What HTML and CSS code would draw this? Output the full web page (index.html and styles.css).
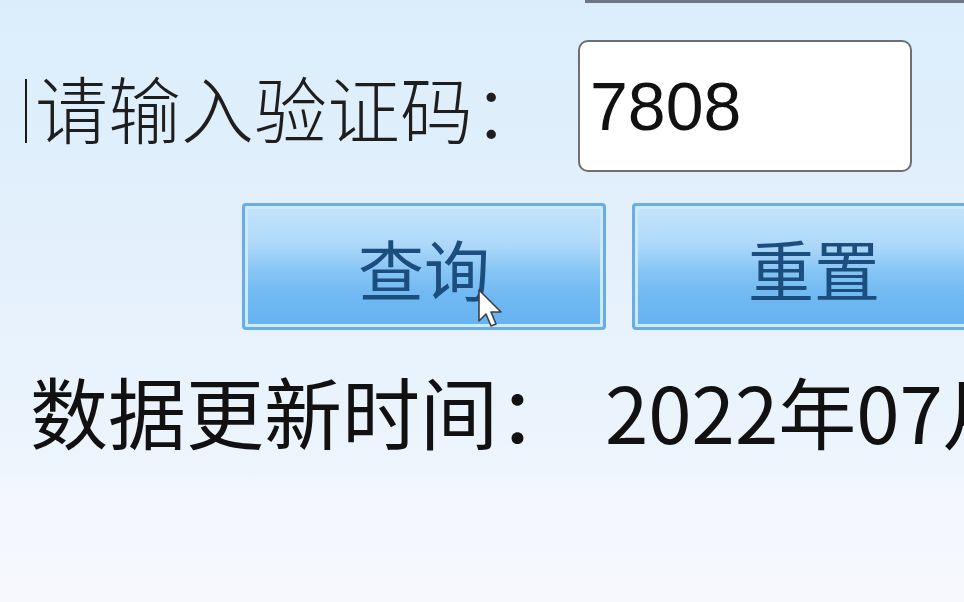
FILE: index.html
```html
<!DOCTYPE html>
<html lang="zh-CN">
<head>
<meta charset="utf-8">
<title>验证码查询</title>
<link rel="stylesheet" href="styles.css">
</head>
<body>
<div class="screen">
  <div class="top-edge"></div>
  <div class="row verify">
    <span class="caret"></span>
    <label class="label" for="code">请输入验证码：</label>
    <div class="input" id="code">7808</div>
  </div>
  <div class="row buttons">
    <button class="btn" type="button">查询</button>
    <button class="btn" type="button">重置</button>
  </div>
  <div class="row update">
    <span class="label2">数据更新时间：</span>
    <span class="date">2022年07月</span>
  </div>
  <svg class="pointer" width="34" height="44" viewBox="0 0 34 44" aria-hidden="true">
    <path d="M2 2 L2 33 L9 26 L14 38 L19 36 L14 24 L24 24 Z" fill="#ffffff" stroke="#3a3f48" stroke-width="1.6" stroke-linejoin="round"/>
  </svg>
</div>
</body>
</html>
```
FILE: styles.css
```css
html, body {
  margin: 0;
  padding: 0;
}
body {
  font-family: "Noto Sans CJK SC", "Noto Sans", sans-serif;
  background: #f5f8fd;
}
.screen {
  position: relative;
  width: 964px;
  height: 602px;
  overflow: hidden;
  background: linear-gradient(180deg, #dbedfb 0%, #e3f0fc 40%, #edf5fd 78%, #f3f7fd 81%, #f6f8fd 100%);
}
.top-edge {
  margin-left: 585px;
  height: 0;
  border-top: 3px solid #6e7682;
}
.row {
  display: flex;
  align-items: center;
  white-space: nowrap;
}
.verify {
  margin-top: 37px;
  padding-left: 25px;
  height: 132px;
}
.caret {
  width: 2px;
  height: 64px;
  margin-top: 10px;
  background: #1a1a1a;
  flex-shrink: 0;
}
.label {
  margin-left: 8px;
  font-size: 73px;
  font-weight: 300;
  line-height: 1;
  color: #1e1e1e;
}
.input {
  box-sizing: border-box;
  margin-left: 32px;
  width: 334px;
  height: 132px;
  flex-shrink: 0;
  border: 2px solid #6f6f6f;
  border-radius: 10px;
  background: #ffffff;
  padding-left: 10px;
  display: flex;
  align-items: center;
  font-family: "Liberation Sans", Arial, sans-serif;
  font-size: 68px;
  color: #111111;
}
.buttons {
  margin-top: 31px;
  padding-left: 242px;
  gap: 26px;
}
.btn {
  box-sizing: border-box;
  flex-shrink: 0;
  width: 364px;
  height: 127px;
  padding: 0;
  border: 3px solid #68ade6;
  border-radius: 4px;
  box-shadow: inset 0 0 0 3px #cdeafd;
  background: linear-gradient(180deg, #c4e4fb 0%, #aed8f9 32%, #84c4f4 55%, #6fb8f2 75%, #66b3f0 100%);
  font-family: "Noto Sans CJK SC", sans-serif;
  font-size: 66px;
  line-height: 1;
  color: #1b4d7e;
}
.update {
  margin-top: 36px;
  padding-left: 30px;
  font-size: 78px;
  line-height: 88px;
  color: #111111;
}
.date {
  margin-left: 29px;
}
.pointer {
  position: absolute;
  left: 477px;
  top: 288px;
}
```
